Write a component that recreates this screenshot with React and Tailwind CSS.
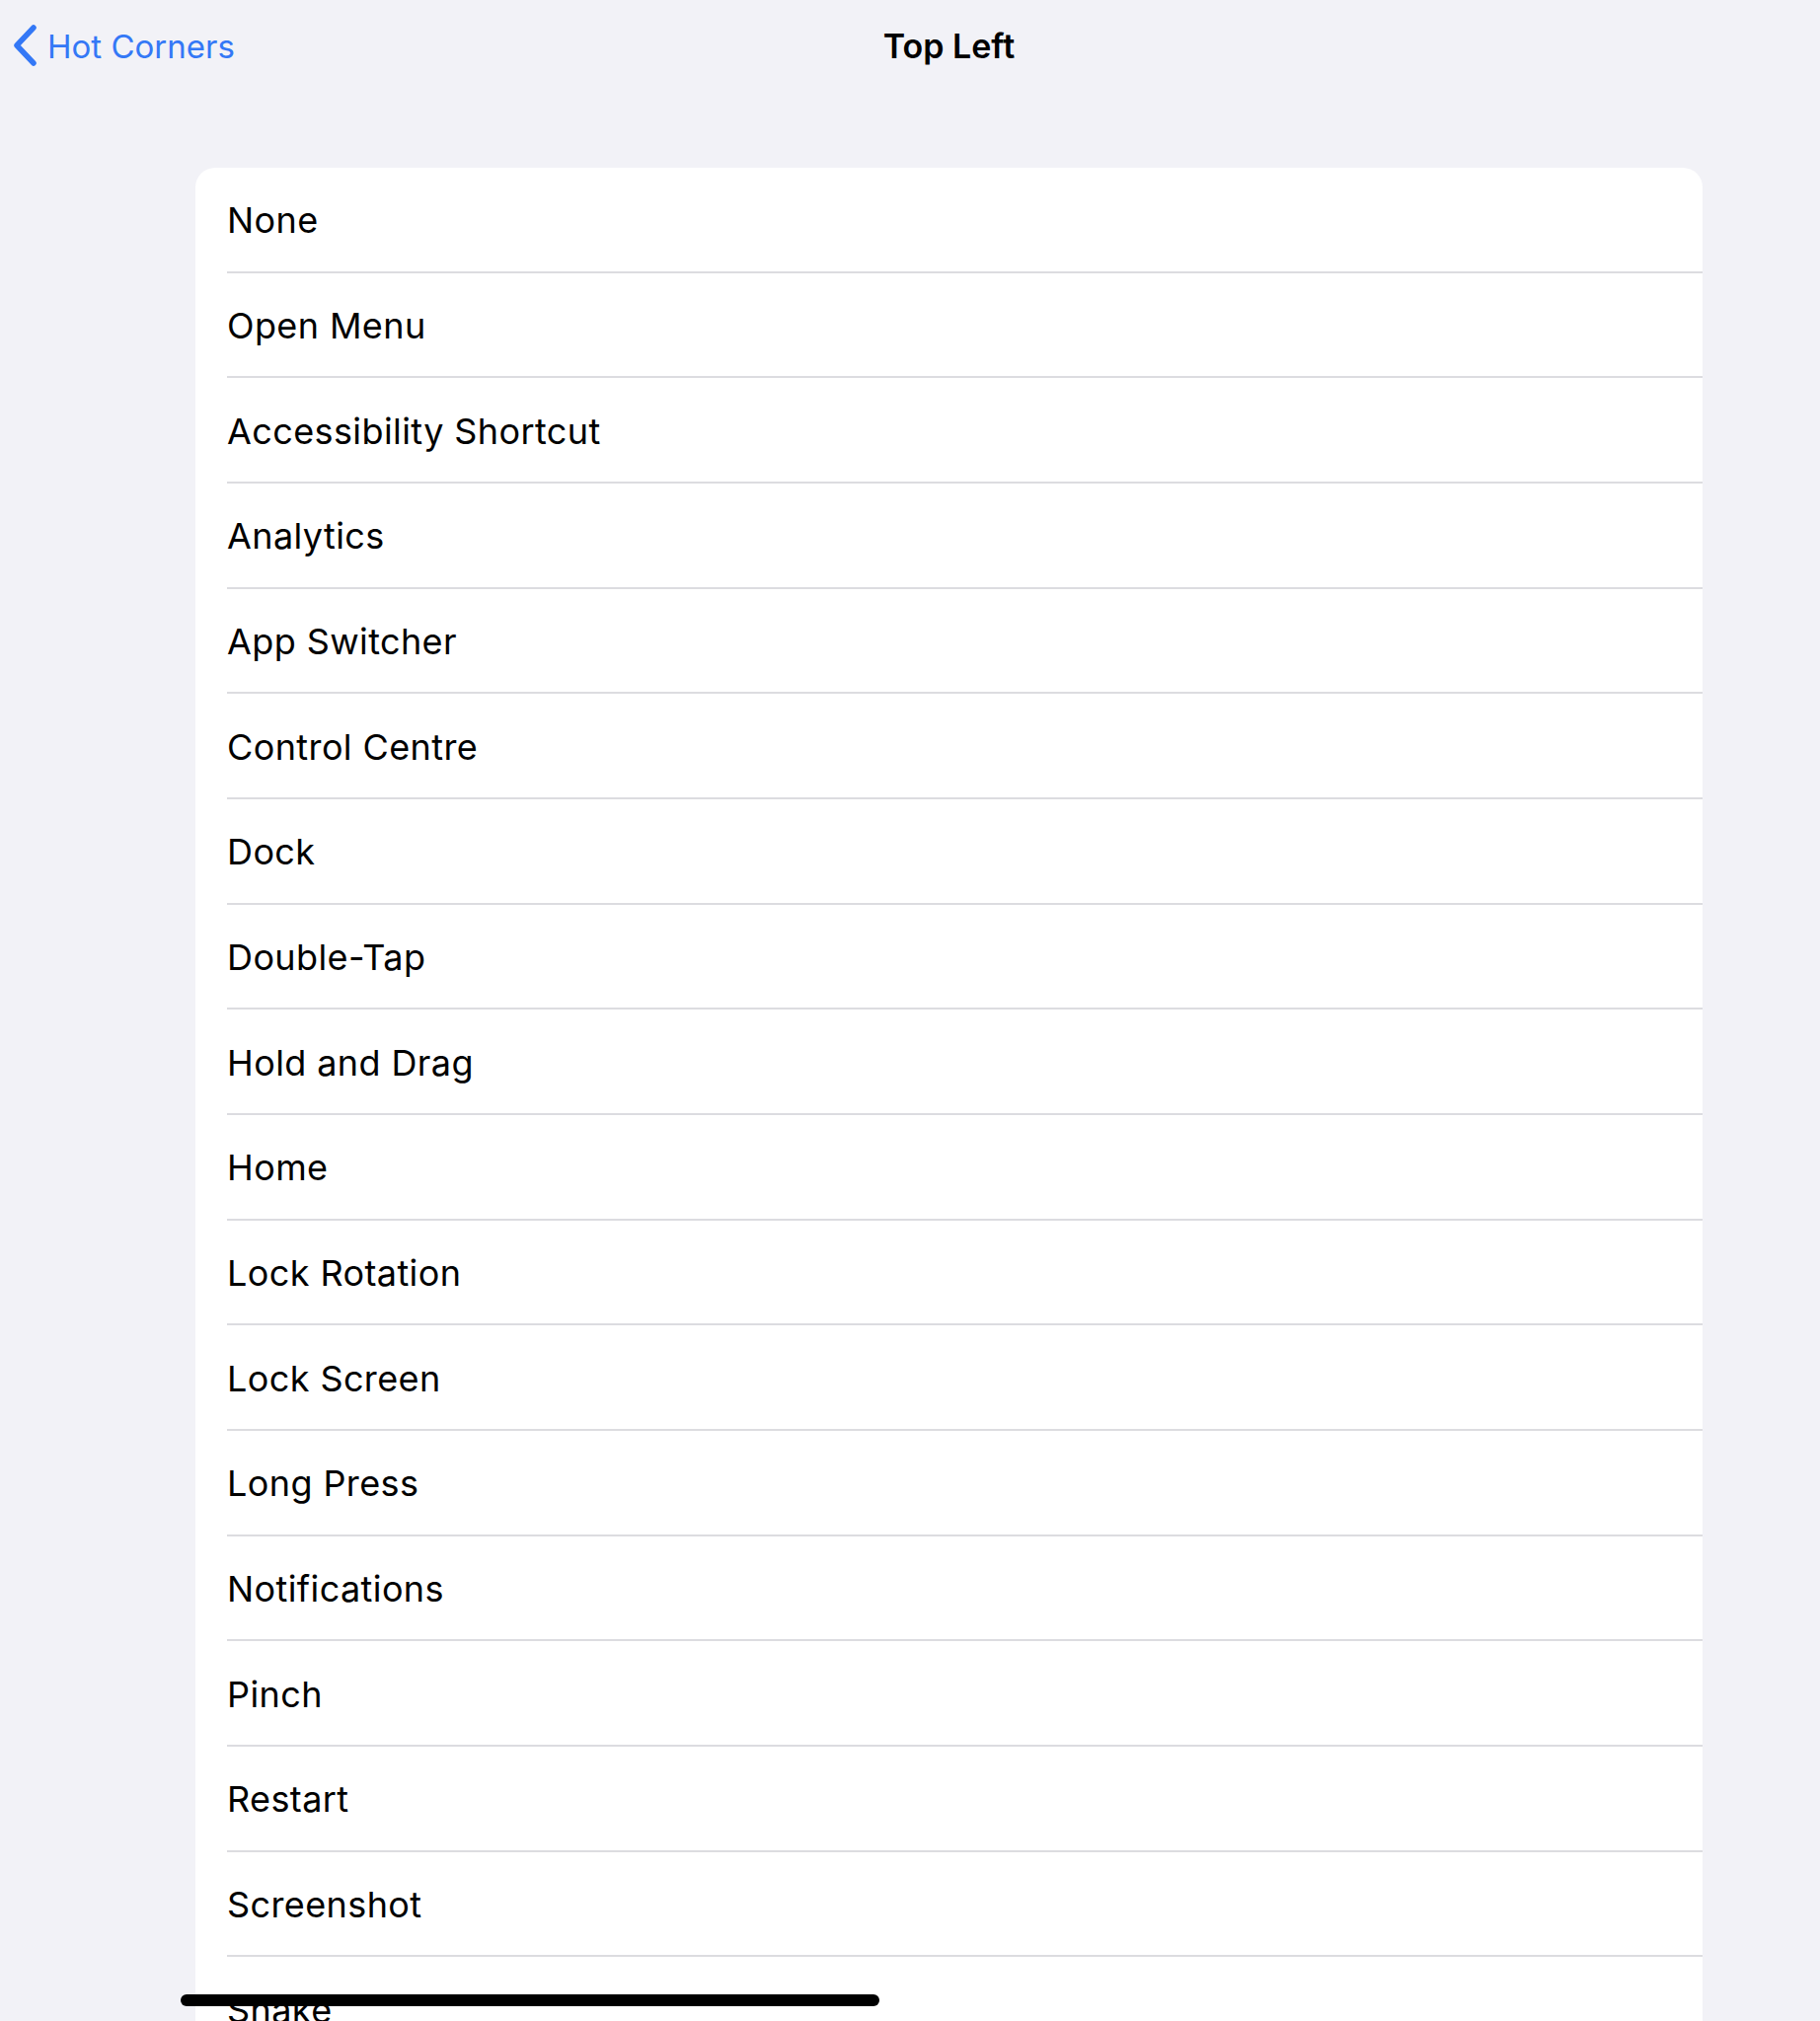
import React from "react";

const items = [
  "None",
  "Open Menu",
  "Accessibility Shortcut",
  "Analytics",
  "App Switcher",
  "Control Centre",
  "Dock",
  "Double-Tap",
  "Hold and Drag",
  "Home",
  "Lock Rotation",
  "Lock Screen",
  "Long Press",
  "Notifications",
  "Pinch",
  "Restart",
  "Screenshot",
  "Shake",
];

export default function App() {
  return (
    <div
      className="relative w-[1844px] h-[2048px] overflow-hidden bg-[#f2f2f7] text-black"
      style={{ fontFamily: "Inter, 'Noto Sans', 'Liberation Sans', sans-serif" }}
    >
      <header className="relative h-[94px] flex items-center">
        <div className="flex items-center pl-[12px] gap-[10px] text-[#3478f6] h-full">
          <svg width="26" height="42" viewBox="0 0 26 42" className="-mt-[2px]">
            <path
              d="M22 3 L5 21 L22 39"
              fill="none"
              stroke="#3478f6"
              strokeWidth="5.5"
              strokeLinecap="round"
              strokeLinejoin="round"
            />
          </svg>
          <span className="text-[33px] leading-none">Hot Corners</span>
        </div>
        <div className="absolute left-[198px] w-[1527px] top-0 h-full flex items-center justify-center pointer-events-none">
          <span className="text-[34px] font-semibold leading-none">Top Left</span>
        </div>
      </header>

      <main className="pt-[76px] pl-[198px] pr-[119px]">
        <div className="bg-white rounded-t-[20px] overflow-hidden">
          {items.map((item, i) => (
            <div key={item} className="pl-[32px]">
              <div
                className={
                  "h-[106.67px] flex items-center " +
                  (i < items.length - 1 ? "border-b-2 border-[#dcdce0]" : "")
                }
              >
                <span className="text-[36px] leading-none tracking-[0.4px] pt-[2px]">{item}</span>
              </div>
            </div>
          ))}
        </div>
      </main>

      <div className="absolute left-[183px] top-[2021px] w-[708px] h-[12px] rounded-full bg-black" />
    </div>
  );
}
